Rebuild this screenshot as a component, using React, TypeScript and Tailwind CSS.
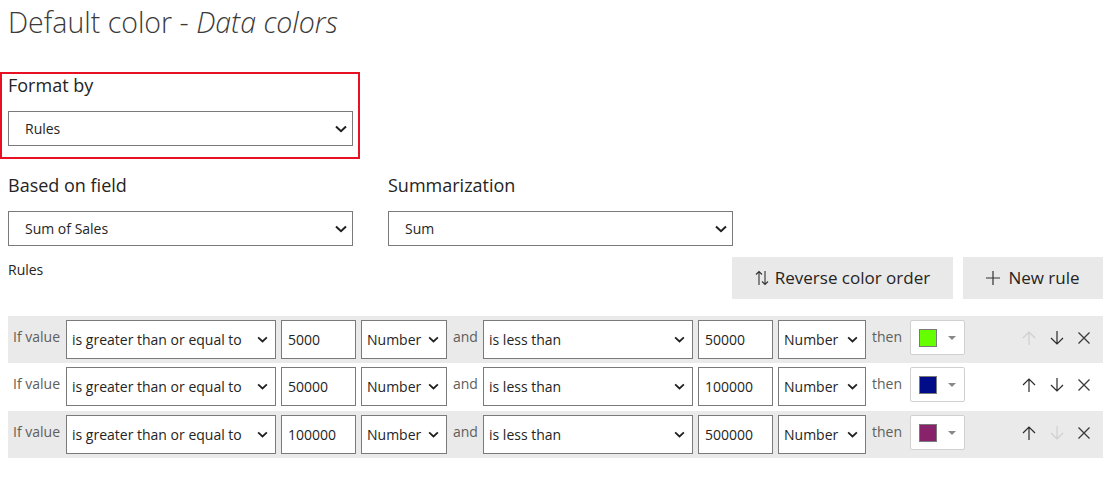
import React from "react";

const font = { fontFamily: '"Segoe UI", "Open Sans", "Liberation Sans", sans-serif' };

const Chevron = ({ className = "" }: { className?: string }) => (
  <svg viewBox="0 0 12 8" className={className} fill="none" stroke="#1f1f1f" strokeWidth="2">
    <path d="M1 1.5 L6 6.2 L11 1.5" />
  </svg>
);

const BigSelect = ({ value }: { value: string }) => (
  <div className="flex h-[35px] w-[345px] items-center justify-between border border-[#7a7a7a] bg-white pl-[16px] pr-[5px] text-[14px] text-[#252423]">
    <span>{value}</span>
    <Chevron className="h-[8px] w-[12px]" />
  </div>
);

const SmallSelect = ({ value, width }: { value: string; width: string }) => (
  <div className={`flex h-[39px] ${width} items-center justify-between border border-[#7a7a7a] bg-white pl-[5px] pr-[7px] text-[14px] text-[#252423]`}>
    <span className="whitespace-nowrap">{value}</span>
    <Chevron className="h-[7px] w-[11px] shrink-0" />
  </div>
);

const ValueInput = ({ value }: { value: string }) => (
  <div className="flex h-[39px] w-[75px] items-center border border-[#7a7a7a] bg-white pl-[6px] text-[14px] text-[#252423]">
    {value}
  </div>
);

const Label = ({ children, className = "" }: { children: React.ReactNode; className?: string }) => (
  <span className={`pt-[8px] text-[14px] leading-[18px] text-[#605e5c] ${className}`}>{children}</span>
);

const ArrowUp = ({ color }: { color: string }) => (
  <svg viewBox="0 0 16 16" className="h-[16px] w-[16px]" fill="none" stroke={color} strokeWidth="1.2">
    <path d="M8 15 V2 M2 8 L8 2 L14 8" />
  </svg>
);

const ArrowDown = ({ color }: { color: string }) => (
  <svg viewBox="0 0 16 16" className="h-[16px] w-[16px]" fill="none" stroke={color} strokeWidth="1.2">
    <path d="M8 1 V14 M2 8 L8 14 L14 8" />
  </svg>
);

const Cross = () => (
  <svg viewBox="0 0 14 14" className="h-[14px] w-[14px]" fill="none" stroke="#3a3a3a" strokeWidth="1.3">
    <path d="M1.5 1.5 L12.5 12.5 M12.5 1.5 L1.5 12.5" />
  </svg>
);

type Rule = { from: string; to: string; color: string; up: boolean; down: boolean; shaded: boolean; h: string };

const rules: Rule[] = [
  { from: "5000", to: "50000", color: "bg-[#66ff00]", up: false, down: true, shaded: true, h: "h-[47px]" },
  { from: "50000", to: "100000", color: "bg-[#000c88]", up: true, down: true, shaded: false, h: "h-[48px]" },
  { from: "100000", to: "500000", color: "bg-[#88226a]", up: true, down: false, shaded: true, h: "h-[47px]" },
];

const RuleRow = ({ rule }: { rule: Rule }) => (
  <div className={`flex ${rule.h} items-start pt-[4px] ${rule.shaded ? "bg-[#eaeaea]" : "bg-white"}`}>
    <Label className="ml-[5px] w-[53px]">If value</Label>
    <SmallSelect value="is greater than or equal to" width="w-[210px]" />
    <div className="ml-[5px]">
      <ValueInput value={rule.from} />
    </div>
    <div className="ml-[5px]">
      <SmallSelect value="Number" width="w-[86px]" />
    </div>
    <Label className="ml-[6px] w-[30px]">and</Label>
    <SmallSelect value="is less than" width="w-[210px]" />
    <div className="ml-[5px]">
      <ValueInput value={rule.to} />
    </div>
    <div className="ml-[5px]">
      <SmallSelect value="Number" width="w-[88px]" />
    </div>
    <Label className="ml-[6px] w-[38px]">then</Label>
    <div className="flex h-[35px] w-[55px] items-center rounded-[2px] border border-[#d2d0ce] bg-white pl-[8px]">
      <div className={`h-[18px] w-[18px] border border-[#7a7a7a] ${rule.color}`} />
      <svg viewBox="0 0 8 4" className="ml-[11px] h-[4px] w-[8px]">
        <path d="M0 0 H8 L4 4 Z" fill="#8a8886" />
      </svg>
    </div>
    <div className="ml-[56px] mt-[10px] flex items-center gap-[12px]">
      <ArrowUp color={rule.up ? "#2b2b2b" : "#cfcfcf"} />
      <ArrowDown color={rule.down ? "#2b2b2b" : "#cfcfcf"} />
      <Cross />
    </div>
  </div>
);

export default function App() {
  return (
    <div className="h-[479px] w-[1116px] bg-white text-[#252423]" style={font}>
      <h1 className="pl-[8px] pt-[3px] text-[28.5px] font-light leading-[38px] text-[#3b3a39]">
        Default color - <span className="italic">Data colors</span>
      </h1>

      <div className="mt-[31px] w-[360px] border-2 border-[#e81123] px-[6px] pb-[11px] pt-[1px]">
        <div className="text-[18px] leading-[20px] text-[#252423]">Format by</div>
        <div className="mt-[16px]">
          <BigSelect value="Rules" />
        </div>
      </div>

      <div className="mt-[16px] flex gap-[35px] px-[8px]">
        <div>
          <div className="text-[18px] leading-[20px]">Based on field</div>
          <div className="mt-[16px]">
            <BigSelect value="Sum of Sales" />
          </div>
        </div>
        <div>
          <div className="text-[18px] leading-[20px]">Summarization</div>
          <div className="mt-[16px]">
            <BigSelect value="Sum" />
          </div>
        </div>
      </div>

      <div className="flex items-start px-[8px]">
        <div className="mt-[15px] text-[14px] leading-[18px]">Rules</div>
        <div className="ml-auto mt-[11px] flex gap-[10px] pr-[5px]">
          <button className="flex h-[42px] w-[221px] items-center justify-center gap-[6px] bg-[#e9e9e9] text-[17px] text-[#252423]">
            <svg viewBox="0 0 14 16" className="h-[16px] w-[14px]" fill="none" stroke="#333" strokeWidth="1.1">
              <path d="M4 15 V1.5 M1 4.5 L4 1.5 L7 4.5 M10 1 V14.5 M7 11.5 L10 14.5 L13 11.5" />
            </svg>
            Reverse color order
          </button>
          <button className="flex h-[42px] w-[140px] items-center justify-center gap-[8px] bg-[#e9e9e9] text-[17px] text-[#252423]">
            <svg viewBox="0 0 14 14" className="h-[14px] w-[14px]" fill="none" stroke="#333" strokeWidth="1.2">
              <path d="M7 0 V14 M0 7 H14" />
            </svg>
            New rule
          </button>
        </div>
      </div>

      <div className="mt-[17px] ml-[8px] w-[1095px]">
        {rules.map((r, i) => (
          <RuleRow key={i} rule={r} />
        ))}
      </div>
    </div>
  );
}
